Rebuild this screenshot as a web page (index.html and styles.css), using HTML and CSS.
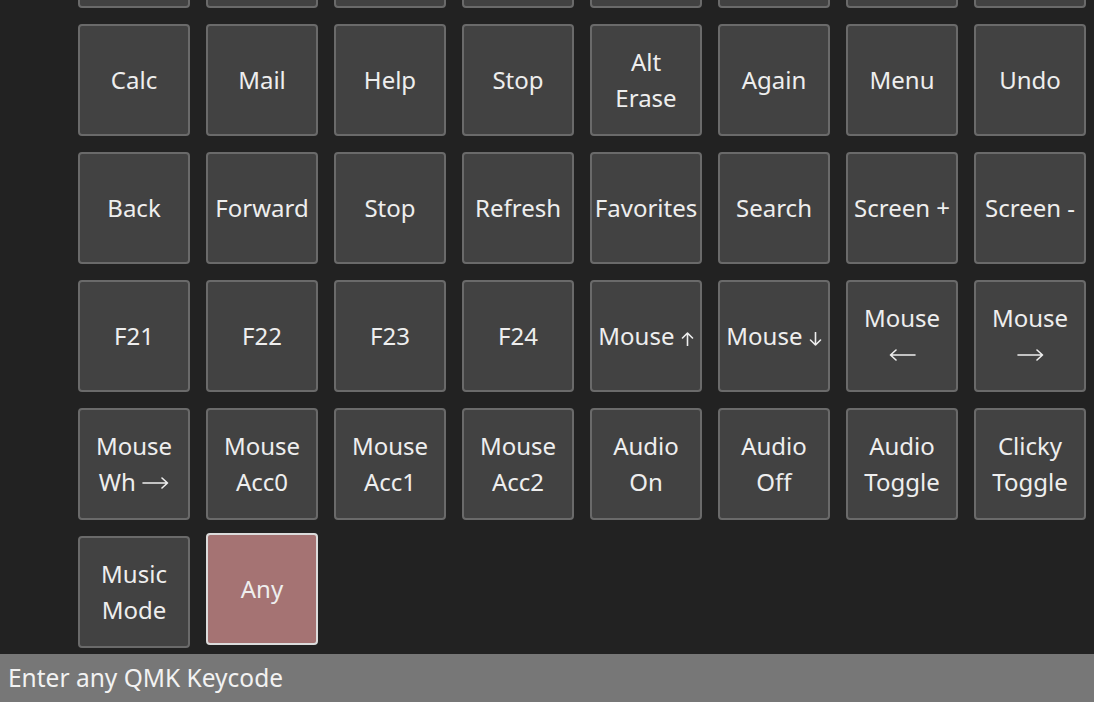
FILE: index.html
```html
<!DOCTYPE html>
<html lang="en">
<head>
    <meta charset="UTF-8">
    <meta name="viewport" content="width=device-width, initial-scale=1.0">
    <title>QMK Keycodes</title>
    <link rel="stylesheet" href="styles.css">
</head>
<body>
    <div class="keycode-panel">
        <div class="key-grid">
            <!-- previous row, scrolled mostly out of view -->
            <div class="key"></div>
            <div class="key"></div>
            <div class="key"></div>
            <div class="key"></div>
            <div class="key"></div>
            <div class="key"></div>
            <div class="key"></div>
            <div class="key"></div>

            <div class="key"><span>Calc</span></div>
            <div class="key"><span>Mail</span></div>
            <div class="key"><span>Help</span></div>
            <div class="key"><span>Stop</span></div>
            <div class="key"><span>Alt<br>Erase</span></div>
            <div class="key"><span>Again</span></div>
            <div class="key"><span>Menu</span></div>
            <div class="key"><span>Undo</span></div>

            <div class="key"><span>Back</span></div>
            <div class="key"><span>Forward</span></div>
            <div class="key"><span>Stop</span></div>
            <div class="key"><span>Refresh</span></div>
            <div class="key"><span>Favorites</span></div>
            <div class="key"><span>Search</span></div>
            <div class="key"><span>Screen +</span></div>
            <div class="key"><span>Screen -</span></div>

            <div class="key"><span>F21</span></div>
            <div class="key"><span>F22</span></div>
            <div class="key"><span>F23</span></div>
            <div class="key"><span>F24</span></div>
            <div class="key"><span>Mouse <svg class="arrow-v" viewBox="0 0 13 14"><path d="M6.5 13.5V1M1.5 6L6.5 1l5 5"/></svg></span></div>
            <div class="key"><span>Mouse <svg class="arrow-v" viewBox="0 0 13 14"><path d="M6.5 0.5V13M1.5 8l5 5 5-5"/></svg></span></div>
            <div class="key"><span>Mouse<br><svg class="arrow-h" viewBox="0 0 27 12"><path d="M26 6H1.5M7 1L1.5 6 7 11"/></svg></span></div>
            <div class="key"><span>Mouse<br><svg class="arrow-h" viewBox="0 0 27 12"><path d="M1 6h24.5M20 1l5.5 5-5.5 5"/></svg></span></div>

            <div class="key"><span>Mouse<br>Wh <svg class="arrow-h" viewBox="0 0 27 12"><path d="M1 6h24.5M20 1l5.5 5-5.5 5"/></svg></span></div>
            <div class="key"><span>Mouse<br>Acc0</span></div>
            <div class="key"><span>Mouse<br>Acc1</span></div>
            <div class="key"><span>Mouse<br>Acc2</span></div>
            <div class="key"><span>Audio<br>On</span></div>
            <div class="key"><span>Audio<br>Off</span></div>
            <div class="key"><span>Audio<br>Toggle</span></div>
            <div class="key"><span>Clicky<br>Toggle</span></div>

            <div class="key"><span>Music<br>Mode</span></div>
            <div class="key key-any"><span>Any</span></div>
        </div>
    </div>

    <div class="status-bar">Enter any QMK Keycode</div>
</body>
</html>
```

FILE: styles.css
```css
* {
    margin: 0;
    padding: 0;
    box-sizing: border-box;
}
html, body {
    height: 100%;
}
body {
    display: flex;
    flex-direction: column;
    background-color: #222;
    color: #eee;
    font-family: 'Noto Sans', 'Open Sans', sans-serif;
    overflow: hidden;
}
.keycode-panel {
    flex: 1;
    overflow: hidden;
}
.key-grid {
    display: grid;
    grid-template-columns: repeat(8, 112px);
    grid-auto-rows: 112px;
    gap: 16px;
    padding-left: 78px;
    margin-top: -104px;
}
.key {
    display: flex;
    align-items: center;
    justify-content: center;
    text-align: center;
    background-color: #424242;
    border: 2px solid #6a6a6a;
    border-radius: 4px;
    font-size: 24px;
    line-height: 36px;
    white-space: nowrap;
}
.key-any {
    background-color: #a57373;
    border-color: #dcdcdc;
    transform: translateY(-3px);
}
.arrow-h,
.arrow-v {
    fill: none;
    stroke: currentColor;
    stroke-width: 1.6;
    stroke-linecap: round;
    stroke-linejoin: round;
}
.arrow-h {
    width: 27px;
    height: 12px;
    vertical-align: 2px;
}
.arrow-v {
    width: 13px;
    height: 14px;
    vertical-align: -1px;
}
.status-bar {
    height: 48px;
    background-color: #777;
    color: #f2f2f2;
    font-size: 24.5px;
    line-height: 48px;
    padding-left: 8px;
}
```
